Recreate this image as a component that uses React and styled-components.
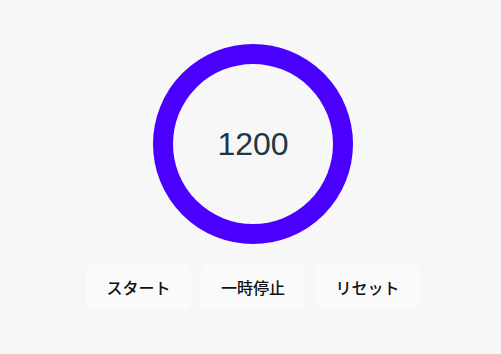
import React from "react";
import styled, { createGlobalStyle } from "styled-components";

const GlobalStyle = createGlobalStyle`
  body {
    margin: 0;
    background: #f7f7f7;
    font-family: "Liberation Sans", "Noto Sans CJK JP", sans-serif;
    line-height: 1.5;
  }
`;

const Page = styled.div`
  min-height: 100vh;
  box-sizing: border-box;
  padding-left: 5px;
  display: flex;
  flex-direction: column;
  align-items: center;
  justify-content: center;
  gap: 20px;
`;

const Ring = styled.div`
  width: 200px;
  height: 200px;
  box-sizing: border-box;
  border: 20px solid #4a00ff;
  border-radius: 50%;
  display: flex;
  align-items: center;
  justify-content: center;
`;

const Count = styled.span`
  font-family: "Liberation Sans", Arial, sans-serif;
  font-size: 32px;
  color: #213547;
`;

const Controls = styled.div`
  display: flex;
  gap: 10px;
`;

const Button = styled.button`
  font-family: "Noto Sans CJK JP", "Liberation Sans", sans-serif;
  font-size: 16px;
  font-weight: 500;
  line-height: 1.5;
  color: #111;
  background: #fafafa;
  border: 1px solid transparent;
  border-radius: 8px;
  padding: 0.6em 1.2em;
  cursor: pointer;
`;

export default function App() {
  return (
    <>
      <GlobalStyle />
      <Page>
        <Ring>
          <Count>1200</Count>
        </Ring>
        <Controls>
          <Button>スタート</Button>
          <Button>一時停止</Button>
          <Button>リセット</Button>
        </Controls>
      </Page>
    </>
  );
}
